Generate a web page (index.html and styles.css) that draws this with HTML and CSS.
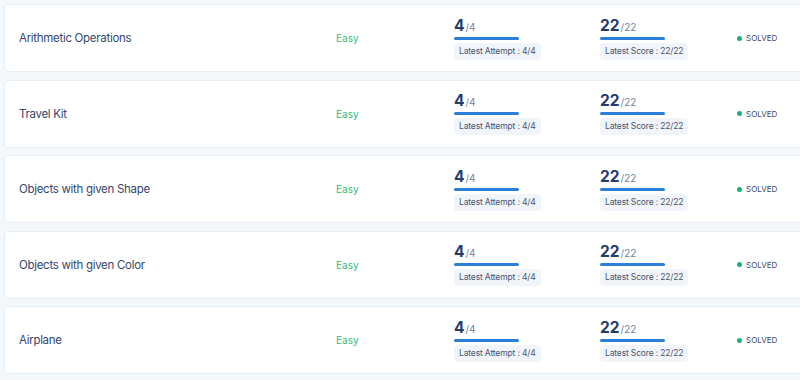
FILE: index.html
```html
<!DOCTYPE html>
<html>
<head>
<meta charset="utf-8">
<link rel="stylesheet" href="styles.css">
</head>
<body>
<div class="list">
  <div class="card">
    <div class="title">Arithmetic Operations</div>
    <div class="level">Easy</div>
    <div class="metric">
      <div class="val"><span class="big">4</span><span class="small">/4</span></div>
      <div class="bar"></div>
      <div class="badge">Latest Attempt : 4/4</div>
    </div>
    <div class="metric">
      <div class="val"><span class="big">22</span><span class="small">/22</span></div>
      <div class="bar"></div>
      <div class="badge">Latest Score : 22/22</div>
    </div>
    <div class="status"><span class="dot"></span>SOLVED</div>
  </div>
  <div class="card">
    <div class="title">Travel Kit</div>
    <div class="level">Easy</div>
    <div class="metric">
      <div class="val"><span class="big">4</span><span class="small">/4</span></div>
      <div class="bar"></div>
      <div class="badge">Latest Attempt : 4/4</div>
    </div>
    <div class="metric">
      <div class="val"><span class="big">22</span><span class="small">/22</span></div>
      <div class="bar"></div>
      <div class="badge">Latest Score : 22/22</div>
    </div>
    <div class="status"><span class="dot"></span>SOLVED</div>
  </div>
  <div class="card">
    <div class="title">Objects with given Shape</div>
    <div class="level">Easy</div>
    <div class="metric">
      <div class="val"><span class="big">4</span><span class="small">/4</span></div>
      <div class="bar"></div>
      <div class="badge">Latest Attempt : 4/4</div>
    </div>
    <div class="metric">
      <div class="val"><span class="big">22</span><span class="small">/22</span></div>
      <div class="bar"></div>
      <div class="badge">Latest Score : 22/22</div>
    </div>
    <div class="status"><span class="dot"></span>SOLVED</div>
  </div>
  <div class="card">
    <div class="title">Objects with given Color</div>
    <div class="level">Easy</div>
    <div class="metric">
      <div class="val"><span class="big">4</span><span class="small">/4</span></div>
      <div class="bar"></div>
      <div class="badge">Latest Attempt : 4/4</div>
    </div>
    <div class="metric">
      <div class="val"><span class="big">22</span><span class="small">/22</span></div>
      <div class="bar"></div>
      <div class="badge">Latest Score : 22/22</div>
    </div>
    <div class="status"><span class="dot"></span>SOLVED</div>
  </div>
  <div class="card">
    <div class="title">Airplane</div>
    <div class="level">Easy</div>
    <div class="metric">
      <div class="val"><span class="big">4</span><span class="small">/4</span></div>
      <div class="bar"></div>
      <div class="badge">Latest Attempt : 4/4</div>
    </div>
    <div class="metric">
      <div class="val"><span class="big">22</span><span class="small">/22</span></div>
      <div class="bar"></div>
      <div class="badge">Latest Score : 22/22</div>
    </div>
    <div class="status"><span class="dot"></span>SOLVED</div>
  </div>
</div>
</body>
</html>
```
FILE: styles.css
```css
html, body {
  margin: 0;
  padding: 0;
  background: #f5f8fb;
  overflow: hidden;
  font-family: Inter, "Noto Sans", sans-serif;
}
.list {
  padding: 4px 0 0 4px;
  width: 830px;
  display: flex;
  flex-direction: column;
  gap: 7.5px;
}
.card {
  box-sizing: border-box;
  height: 68px;
  background: #ffffff;
  border: 1px solid #e6edf4;
  border-radius: 4px;
  display: grid;
  grid-template-columns: 317px 118px 146px 137px 1fr;
  align-items: center;
  padding-left: 14px;
}
.title {
  font-size: 11.5px;
  font-weight: 400;
  color: #36466c;
  letter-spacing: -0.3px;
}
.level {
  font-size: 10px;
  color: #38b97c;
}
.metric {
  display: flex;
  flex-direction: column;
  align-items: flex-start;
}
.val {
  line-height: 16px;
  height: 16px;
  white-space: nowrap;
}
.big {
  font-size: 15.5px;
  font-weight: 700;
  color: #243b6c;
}
.small {
  font-size: 10px;
  color: #7483a0;
  margin-left: 1px;
}
.bar {
  width: 65px;
  height: 3px;
  border-radius: 2px;
  background: #2b7fd8;
  margin-top: 4px;
}
.badge {
  margin-top: 3px;
  background: #f1f4f8;
  border-radius: 4px;
  font-size: 8.5px;
  letter-spacing: -0.15px;
  color: #4a5570;
  padding: 0 5px;
  height: 17px;
  line-height: 17px;
  white-space: nowrap;
}
.status {
  display: flex;
  align-items: center;
  font-size: 8px;
  color: #3b4a70;
}
.dot {
  width: 5px;
  height: 5px;
  border-radius: 50%;
  background: #1ab27a;
  margin-right: 4px;
}
```
